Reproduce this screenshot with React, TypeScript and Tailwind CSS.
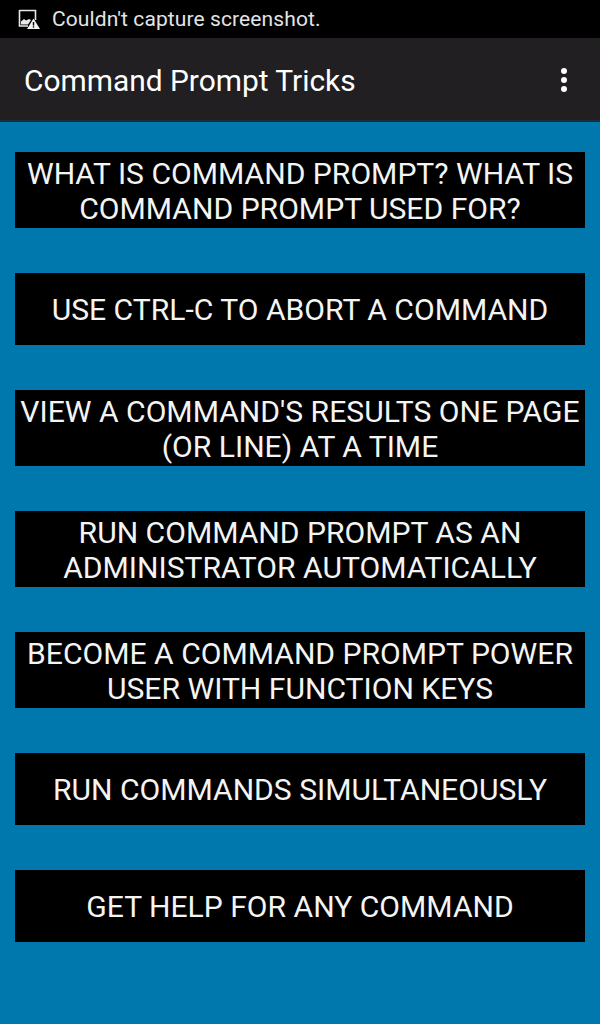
import { FC } from 'react';

const items: { label: string; twoLines: boolean }[] = [
  { label: 'WHAT IS COMMAND PROMPT? WHAT IS COMMAND PROMPT USED FOR?', twoLines: true },
  { label: 'USE CTRL-C TO ABORT A COMMAND', twoLines: false },
  { label: "VIEW A COMMAND'S RESULTS ONE PAGE (OR LINE) AT A TIME", twoLines: true },
  { label: 'RUN COMMAND PROMPT AS AN ADMINISTRATOR AUTOMATICALLY', twoLines: true },
  { label: 'BECOME A COMMAND PROMPT POWER USER WITH FUNCTION KEYS', twoLines: true },
  { label: 'RUN COMMANDS SIMULTANEOUSLY', twoLines: false },
  { label: 'GET HELP FOR ANY COMMAND', twoLines: false },
];

const ScreenshotIcon: FC = () => (
  <svg width="22" height="20" viewBox="0 0 22 20" className="block">
    <path d="M1.5 1.5H17.5V11" fill="none" stroke="#e8e8e8" strokeWidth="1.6" />
    <path d="M1.5 1V17H10" fill="none" stroke="#e8e8e8" strokeWidth="1.6" />
    <path d="M3 15.5V12.5L6 10L8 11.5L11 10L13 11L10 15.5Z" fill="#e8e8e8" />
    <path d="M15.5 9.5L22 20H9Z" fill="#f2f2f2" />
    <rect x="14.8" y="13" width="1.4" height="3.6" fill="#000" />
    <rect x="14.8" y="17.3" width="1.4" height="1.4" fill="#000" />
  </svg>
);

const App: FC = () => {
  return (
    <div className="flex flex-col w-[600px] h-[1024px] overflow-hidden bg-[#0077ad] font-['Roboto',sans-serif] text-white">
      <div className="flex items-center h-[38px] bg-black pl-[18px]">
        <ScreenshotIcon />
        <span className="ml-[12px] pt-[1px] text-[21px] tracking-[0.1px] text-[#e4e4e4]">Couldn't capture screenshot.</span>
      </div>

      <div className="flex items-center justify-between h-[84px] bg-[#211f21] border-b-[2px] border-[#17303b] pl-[24px] pr-[33px]">
        <h1 className="pt-[4px] text-[29.9px] font-normal">Command Prompt Tricks</h1>
        <div className="flex flex-col gap-[3px] pt-[2px]">
          <span className="block w-[6px] h-[6px] rounded-full bg-white" />
          <span className="block w-[6px] h-[6px] rounded-full bg-white" />
          <span className="block w-[6px] h-[6px] rounded-full bg-white" />
        </div>
      </div>

      <div className="flex flex-col gap-[45px] px-[15px] pt-[30px]">
        {items.map((item) => (
          <div
            key={item.label}
            className={`flex items-center justify-center min-h-[72px] bg-black text-center text-[30.1px] leading-[35px] text-[#f4f4f4] ${item.twoLines ? 'pt-[4px] pb-[2px]' : 'py-[3px]'}`}
          >
            {item.label}
          </div>
        ))}
      </div>
    </div>
  );
};

export default App;
